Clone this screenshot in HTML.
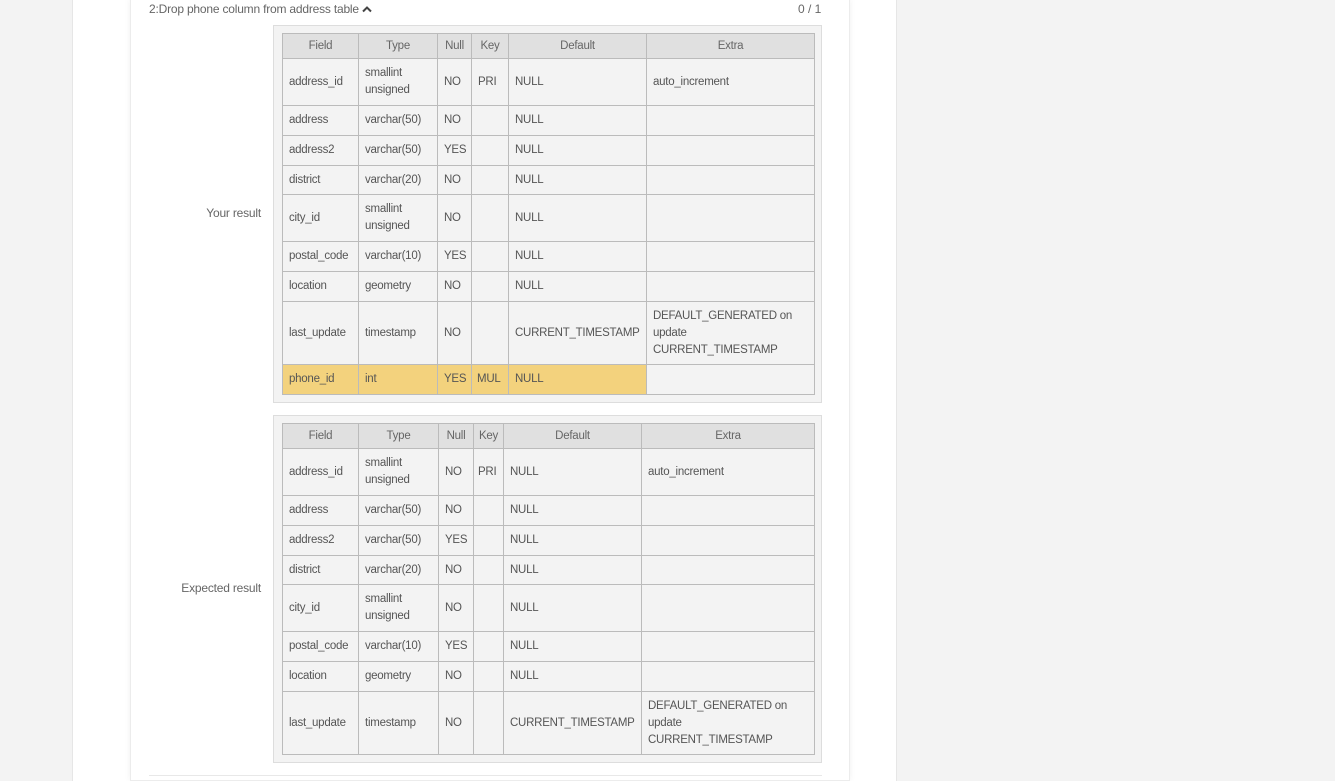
<!DOCTYPE html>
<html><head><meta charset="utf-8"><style>
*{box-sizing:border-box;margin:0;padding:0}
html,body{width:1335px;height:781px;overflow:hidden}
body{background:#f3f3f3;font-family:"Liberation Sans",sans-serif;font-size:12px;color:#555;position:relative}
.panel{position:absolute;left:72px;top:0;width:825px;height:781px;background:#fff;border-left:1px solid #e6e6e6;border-right:1px solid #e6e6e6}
.card{position:absolute;left:130px;top:-2px;width:720px;height:783px;background:#fff;border:1px solid #ececec;box-shadow:0 0 6px rgba(0,0,0,.06)}
.title{position:absolute;left:149px;top:2px;font-size:12px;color:#666;letter-spacing:-0.2px}
.score{position:absolute;left:798px;top:2px;color:#666}
.sep{position:absolute;left:149px;top:775px;width:673px;height:1px;background:#e8e8e8}
.lbl{position:absolute;width:140px;left:121px;text-align:right;color:#666;letter-spacing:-0.2px}
.box{position:absolute;left:273px;width:549px;background:#f3f3f3;border:1px solid #ddd}
table{position:absolute;left:8px;top:7px;border-collapse:collapse;table-layout:fixed;width:532px;font-size:11.5px;letter-spacing:-0.25px}
td,th{border:1px solid #bbb;padding:0 6px;line-height:17px;text-align:left;font-weight:normal;vertical-align:middle;white-space:normal;overflow:hidden}
th{background:#e0e0e0;text-align:center;height:25px;color:#666}
tr.h td{background:#f3d27d}
tr.h td.e{background:#f3f3f3}
</style></head><body>
<div class="panel"></div>
<div class="card"></div>
<div class="title">2:Drop phone column from address table <svg width="10" height="8" viewBox="0 0 10 8" style="vertical-align:0"><path d="M1 6.5L5 2.5L9 6.5" stroke="#444" stroke-width="2" fill="none"/></svg></div>
<div class="score">0 / 1</div>
<div class="lbl" style="top:206px">Your result</div>
<div class="lbl" style="top:581px">Expected result</div>

<div class="box" style="top:25px;height:378px">
<table>
<colgroup><col style="width:76px"><col style="width:79px"><col style="width:34px"><col style="width:37px"><col style="width:138px"><col style="width:168px"></colgroup>
<tr><th>Field</th><th>Type</th><th style="padding:0">Null</th><th style="padding:0">Key</th><th>Default</th><th>Extra</th></tr>
<tr style="height:47px"><td>address_id</td><td>smallint unsigned</td><td>NO</td><td>PRI</td><td>NULL</td><td>auto_increment</td></tr>
<tr style="height:30px"><td>address</td><td>varchar(50)</td><td>NO</td><td></td><td>NULL</td><td></td></tr>
<tr style="height:30px"><td>address2</td><td>varchar(50)</td><td>YES</td><td></td><td>NULL</td><td></td></tr>
<tr style="height:29px"><td>district</td><td>varchar(20)</td><td>NO</td><td></td><td>NULL</td><td></td></tr>
<tr style="height:47px"><td>city_id</td><td>smallint unsigned</td><td>NO</td><td></td><td>NULL</td><td></td></tr>
<tr style="height:30px"><td>postal_code</td><td>varchar(10)</td><td>YES</td><td></td><td>NULL</td><td></td></tr>
<tr style="height:30px"><td>location</td><td>geometry</td><td>NO</td><td></td><td>NULL</td><td></td></tr>
<tr style="height:63px"><td>last_update</td><td>timestamp</td><td>NO</td><td></td><td>CURRENT_TIMESTAMP</td><td>DEFAULT_GENERATED on update CURRENT_TIMESTAMP</td></tr>
<tr class="h" style="height:30px"><td>phone_id</td><td>int</td><td>YES</td><td style="padding:0 5px">MUL</td><td>NULL</td><td class="e"></td></tr>
</table></div>

<div class="box" style="top:415px;height:348px">
<table>
<colgroup><col style="width:76px"><col style="width:80px"><col style="width:35px"><col style="width:30px"><col style="width:138px"><col style="width:173px"></colgroup>
<tr><th>Field</th><th>Type</th><th style="padding:0">Null</th><th style="padding:0">Key</th><th>Default</th><th>Extra</th></tr>
<tr style="height:47px"><td>address_id</td><td>smallint unsigned</td><td>NO</td><td style="padding:0 4px">PRI</td><td>NULL</td><td>auto_increment</td></tr>
<tr style="height:30px"><td>address</td><td>varchar(50)</td><td>NO</td><td></td><td>NULL</td><td></td></tr>
<tr style="height:30px"><td>address2</td><td>varchar(50)</td><td>YES</td><td></td><td>NULL</td><td></td></tr>
<tr style="height:29px"><td>district</td><td>varchar(20)</td><td>NO</td><td></td><td>NULL</td><td></td></tr>
<tr style="height:47px"><td>city_id</td><td>smallint unsigned</td><td>NO</td><td></td><td>NULL</td><td></td></tr>
<tr style="height:30px"><td>postal_code</td><td>varchar(10)</td><td>YES</td><td></td><td>NULL</td><td></td></tr>
<tr style="height:30px"><td>location</td><td>geometry</td><td>NO</td><td></td><td>NULL</td><td></td></tr>
<tr style="height:63px"><td>last_update</td><td>timestamp</td><td>NO</td><td></td><td>CURRENT_TIMESTAMP</td><td>DEFAULT_GENERATED on update CURRENT_TIMESTAMP</td></tr>
</table></div>
<div class="sep"></div>
</body></html>
